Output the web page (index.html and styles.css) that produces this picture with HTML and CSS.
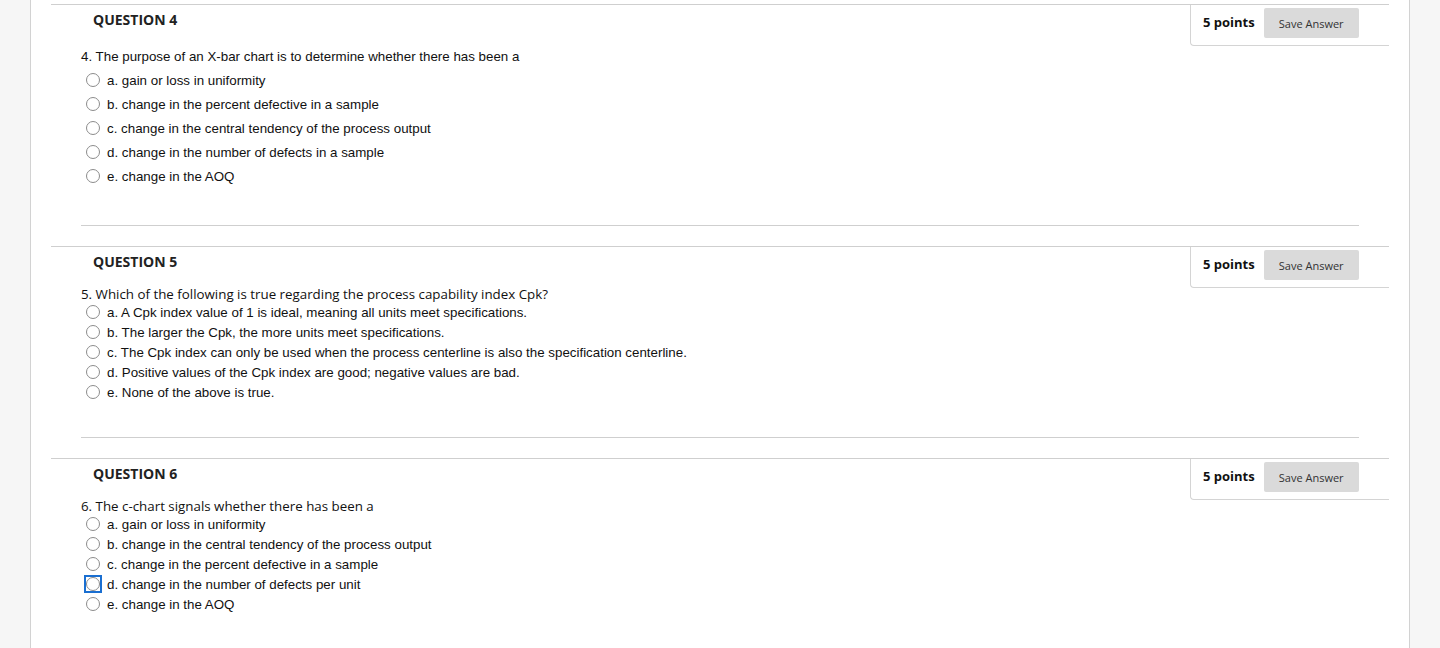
FILE: index.html
```html
<!DOCTYPE html>
<html>
<head>
<meta charset="utf-8">
<link rel="stylesheet" href="styles.css">
</head>
<body>
<div class="side side-left"></div>
<main class="main">
  <section class="q q4">
    <div class="q-head">
      <h3 class="q-title">QUESTION 4</h3>
      <div class="points-box">
        <span class="points">5 points</span>
        <button class="save">Save Answer</button>
      </div>
    </div>
    <div class="q-body">
      <p class="q-text arial">4. The purpose of an X-bar chart is to determine whether there has been a</p>
      <ul class="opts opts-wide">
        <li><span class="radio"></span>a. gain or loss in uniformity</li>
        <li><span class="radio"></span>b. change in the percent defective in a sample</li>
        <li><span class="radio"></span>c. change in the central tendency of the process output</li>
        <li><span class="radio"></span>d. change in the number of defects in a sample</li>
        <li><span class="radio"></span>e. change in the AOQ</li>
      </ul>
      <div class="sep sep-wide"></div>
    </div>
  </section>

  <section class="q">
    <div class="q-head">
      <h3 class="q-title">QUESTION 5</h3>
      <div class="points-box">
        <span class="points">5 points</span>
        <button class="save">Save Answer</button>
      </div>
    </div>
    <div class="q-body">
      <p class="q-text open">5. Which of the following is true regarding the process capability index Cpk?</p>
      <ul class="opts">
        <li><span class="radio"></span>a. A Cpk index value of 1 is ideal, meaning all units meet specifications.</li>
        <li><span class="radio"></span>b. The larger the Cpk, the more units meet specifications.</li>
        <li><span class="radio"></span>c. The Cpk index can only be used when the process centerline is also the specification centerline.</li>
        <li><span class="radio"></span>d. Positive values of the Cpk index are good; negative values are bad.</li>
        <li><span class="radio"></span>e. None of the above is true.</li>
      </ul>
      <div class="sep"></div>
    </div>
  </section>

  <section class="q">
    <div class="q-head">
      <h3 class="q-title">QUESTION 6</h3>
      <div class="points-box">
        <span class="points">5 points</span>
        <button class="save">Save Answer</button>
      </div>
    </div>
    <div class="q-body">
      <p class="q-text open">6. The c-chart signals whether there has been a</p>
      <ul class="opts">
        <li><span class="radio"></span>a. gain or loss in uniformity</li>
        <li><span class="radio"></span>b. change in the central tendency of the process output</li>
        <li><span class="radio"></span>c. change in the percent defective in a sample</li>
        <li><span class="radio focus"></span>d. change in the number of defects per unit</li>
        <li><span class="radio"></span>e. change in the AOQ</li>
      </ul>
    </div>
  </section>
</main>
<div class="side side-right"></div>
</body>
</html>
```

FILE: styles.css
```css
html, body {
  margin: 0;
  padding: 0;
  height: 648px;
  overflow: hidden;
  background: #fff;
}
body {
  display: flex;
  color: #111;
}
.side {
  width: 30px;
  flex: none;
  background: #f6f6f6;
}
.side-left { border-right: 1px solid #d2d2d2; }
.side-right { border-left: 1px solid #d2d2d2; }
.main {
  flex: 1;
  padding: 4px 20px 0 20px;
  min-width: 0;
}
.q {
  border-top: 1px solid #cfcfcf;
}
.q-head {
  display: flex;
  justify-content: space-between;
  align-items: flex-start;
}
.q-title {
  margin: 0;
  padding: 5px 0 0 42px;
  font-family: "Open Sans", sans-serif;
  font-weight: 700;
  font-size: 14px;
  line-height: 20px;
  color: #222;
}
.points-box {
  width: 186px;
  height: 40px;
  padding-left: 12px;
  border-left: 1px solid #d4d4d4;
  border-bottom: 1px solid #d4d4d4;
  border-bottom-left-radius: 4px;
  display: flex;
  align-items: flex-start;
  box-sizing: content-box;
}
.points {
  font-family: "Open Sans", sans-serif;
  font-weight: 700;
  font-size: 13px;
  line-height: 20px;
  margin-top: 7px;
  color: #111;
}
.save {
  margin: 3px 0 0 9px;
  width: 95px;
  height: 30px;
  border: none;
  border-radius: 2px;
  background: #dadada;
  font-family: "Open Sans", sans-serif;
  font-size: 11px;
  color: #333;
  padding: 0;
}
.q-body {
  padding: 0 30px;
}
.q-text {
  margin: 0;
  font-size: 13.33px;
  color: #111;
}
.arial {
  font-family: "Liberation Sans", Arial, sans-serif;
  line-height: 16px;
  padding-top: 3px;
}
.open {
  font-family: "Open Sans", sans-serif;
  line-height: 16px;
  margin-top: -2px;
}
.opts {
  list-style: none;
  margin: 0;
  padding: 0 0 0 5px;
  font-family: "Liberation Sans", Arial, sans-serif;
  font-size: 13.33px;
  color: #111;
}
.opts li {
  display: flex;
  align-items: center;
  height: 20px;
}
.opts-wide { margin-top: 3px; }
.opts-wide li { height: 24px; }
.radio {
  width: 12px;
  height: 12px;
  border: 1px solid #8c8c8c;
  border-radius: 50%;
  background: #fff;
  margin-right: 7px;
  flex: none;
  position: relative;
}
.radio.focus::after {
  content: "";
  position: absolute;
  left: -3px;
  top: -3px;
  width: 14px;
  height: 14px;
  border: 2px solid #1a6fd1;
}
.sep {
  height: 1px;
  background: #cfcfcf;
  margin-top: 35px;
  margin-bottom: 20px;
}
.sep-wide { margin-top: 37px; }
```
